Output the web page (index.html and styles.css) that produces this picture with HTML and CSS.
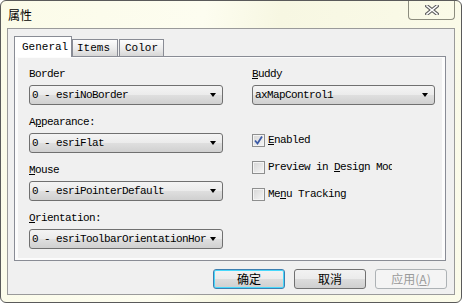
FILE: index.html
```html
<!DOCTYPE html>
<html lang="zh-CN">
<head>
    <meta charset="UTF-8">
    <title>属性</title>
    <link rel="stylesheet" href="styles.css">
</head>
<body>
    <div class="window">
        <div class="titlebar">
            <span class="title">属性</span>
            <div class="close-btn">
                <svg width="14" height="10" viewBox="0 0 14 10">
                    <path d="M2 1 L12 9 M12 1 L2 9" stroke="#5f5f5f" stroke-width="3.6" stroke-linecap="square"/>
                    <path d="M2 1 L12 9 M12 1 L2 9" stroke="#ffffff" stroke-width="1.6" stroke-linecap="square"/>
                </svg>
            </div>
        </div>

        <div class="client">
            <div class="tabs">
                <div class="tab active">General</div>
                <div class="tab items">Items</div>
                <div class="tab color">Color</div>
            </div>

            <div class="panel">
                <div class="page">
                    <div class="col">
                        <div class="field">
                            <div class="label">Border</div>
                            <div class="combo"><span>0 - esriNoBorder</span><i class="arrow"></i></div>
                        </div>
                        <div class="field">
                            <div class="label">A<u>p</u>pearance:</div>
                            <div class="combo"><span>0 - esriFlat</span><i class="arrow"></i></div>
                        </div>
                        <div class="field">
                            <div class="label"><u>M</u>ouse</div>
                            <div class="combo"><span>0 - esriPointerDefault</span><i class="arrow"></i></div>
                        </div>
                        <div class="field">
                            <div class="label"><u>O</u>rientation:</div>
                            <div class="combo"><span>0 - esriToolbarOrientationHor</span><i class="arrow"></i></div>
                        </div>
                    </div>

                    <div class="col">
                        <div class="field">
                            <div class="label"><u>B</u>uddy</div>
                            <div class="combo"><span>axMapControl1</span><i class="arrow"></i></div>
                        </div>
                        <div class="checks">
                            <div class="check">
                                <span class="box">
                                    <svg width="11" height="11" viewBox="0 0 11 11">
                                        <path d="M2 5.5 L4.5 8.5 L9 1.5" fill="none" stroke="#3b5aa6" stroke-width="1.8"/>
                                    </svg>
                                </span>
                                <span class="text"><u>E</u>nabled</span>
                            </div>
                            <div class="check">
                                <span class="box"></span>
                                <span class="text clip">Preview in <u>D</u>esign Mode</span>
                            </div>
                            <div class="check">
                                <span class="box"></span>
                                <span class="text">Me<u>n</u>u Tracking</span>
                            </div>
                        </div>
                    </div>
                </div>
            </div>

            <div class="buttons">
                <button class="btn default">确定</button>
                <button class="btn">取消</button>
                <button class="btn disabled">应用(<u>A</u>)</button>
            </div>
        </div>
    </div>
</body>
</html>
```

FILE: styles.css
```css
body {
    margin: 0;
    background: #ffffff;
    font-family: "Liberation Mono", monospace;
    font-size: 11px;
    color: #000;
}

.window {
    width: 462px;
    height: 303px;
    box-sizing: border-box;
    border: 1px solid #5a5a5a;
    border-radius: 6px;
    background: linear-gradient(100deg, #fbfbe8 0%, #fdfdf0 40%, #f7f7e2 55%, #fbfbea 100%);
    display: flex;
    flex-direction: column;
    overflow: hidden;
}

.titlebar {
    height: 27px;
    display: flex;
    align-items: flex-start;
    padding-left: 7px;
}

.title {
    font-family: "Noto Sans CJK SC", sans-serif;
    font-size: 12px;
    line-height: 12px;
    margin-top: 8px;
}

.close-btn {
    margin-left: auto;
    margin-right: 6px;
    margin-top: -1px;
    width: 45px;
    height: 19px;
    border: 1px solid #8c8c7e;
    border-top: none;
    border-radius: 0 0 4px 4px;
    display: flex;
    align-items: center;
    justify-content: center;
}

.client {
    flex: 1;
    margin: 0 6px 7px 6px;
    border: 1px solid #9a9a9a;
    background: #f0f0f0;
    padding: 7px 7px 0 6px;
    display: flex;
    flex-direction: column;
}

/* tabs */
.tabs {
    height: 20px;
    display: flex;
    align-items: flex-end;
    position: relative;
    z-index: 1;
}

.tab {
    box-sizing: border-box;
    height: 17px;
    border: 1px solid #898c95;
    border-bottom: none;
    background: linear-gradient(#fdfdfd, #ececec 55%, #d6d6d6);
    line-height: 16px;
    padding-left: 5px;
}

.tab.active {
    width: 58px;
    height: 21px;
    margin-bottom: -1px;
    background: #ffffff;
    padding-left: 7px;
    line-height: 20px;
}

.tab.items {
    width: 46px;
    padding-left: 4px;
}

.tab.color {
    width: 45px;
    margin-left: 1px;
}

.panel {
    width: 432px;
    height: 205px;
    box-sizing: border-box;
    border: 1px solid #898c95;
    background: #fcfcfc;
    padding: 1px 3px 2px 3px;
}

.page {
    height: 100%;
    background: #f0f0f0;
    padding: 9px 0 0 11px;
    box-sizing: border-box;
    display: grid;
    grid-template-columns: 194px 183px;
    column-gap: 29px;
    align-items: start;
}

.col {
    display: flex;
    flex-direction: column;
    gap: 10px;
}

.field {
    display: flex;
    flex-direction: column;
    gap: 4px;
}

.label {
    height: 14px;
    line-height: 14px;
    letter-spacing: -0.6px;
}

.combo {
    height: 20px;
    box-sizing: border-box;
    border: 1px solid #707070;
    border-radius: 3px;
    background: linear-gradient(#f4f4f4, #ebebeb 50%, #dfdfdf 50%, #d0d0d0);
    display: flex;
    align-items: center;
    padding: 0 6px 0 2px;
    letter-spacing: -0.6px;
    white-space: nowrap;
    overflow: hidden;
}

.combo span {
    flex: 1;
    overflow: hidden;
}

.arrow {
    width: 0;
    height: 0;
    border-left: 3.5px solid transparent;
    border-right: 3.5px solid transparent;
    border-top: 4px solid #000;
    margin-left: 3px;
}

/* checkboxes */
.checks {
    margin-top: 19px;
    display: flex;
    flex-direction: column;
    gap: 14px;
}

.check {
    height: 13px;
    display: flex;
    align-items: center;
    gap: 3px;
}

.box {
    width: 13px;
    height: 13px;
    box-sizing: border-box;
    border: 1px solid #8e8f8f;
    background: linear-gradient(135deg, #d6d6d6, #f6f6f6);
    box-shadow: inset 0 0 0 1px #f4f4f4;
    display: flex;
    align-items: center;
    justify-content: center;
}

.text {
    letter-spacing: -0.6px;
    line-height: 13px;
    white-space: nowrap;
}

.text.clip {
    width: 124px;
    overflow: hidden;
}

/* dialog buttons */
.buttons {
    display: flex;
    justify-content: flex-end;
    gap: 9px;
    margin-top: 8px;
}

.btn {
    width: 72px;
    height: 20px;
    padding: 0;
    border: 1px solid #707070;
    border-radius: 3px;
    background: linear-gradient(#f2f2f2, #ebebeb 50%, #dddddd 50%, #cfcfcf);
    font-family: "Noto Sans CJK SC", sans-serif;
    font-size: 12px;
    line-height: 16px;
    color: #000;
}

.btn.default {
    border-color: #3c7fb1;
    box-shadow: inset 0 0 0 1px #48d8fb;
}

.btn.disabled {
    border-color: #adb2b5;
    background: #f4f4f4;
    color: #9a9a9a;
}
```
